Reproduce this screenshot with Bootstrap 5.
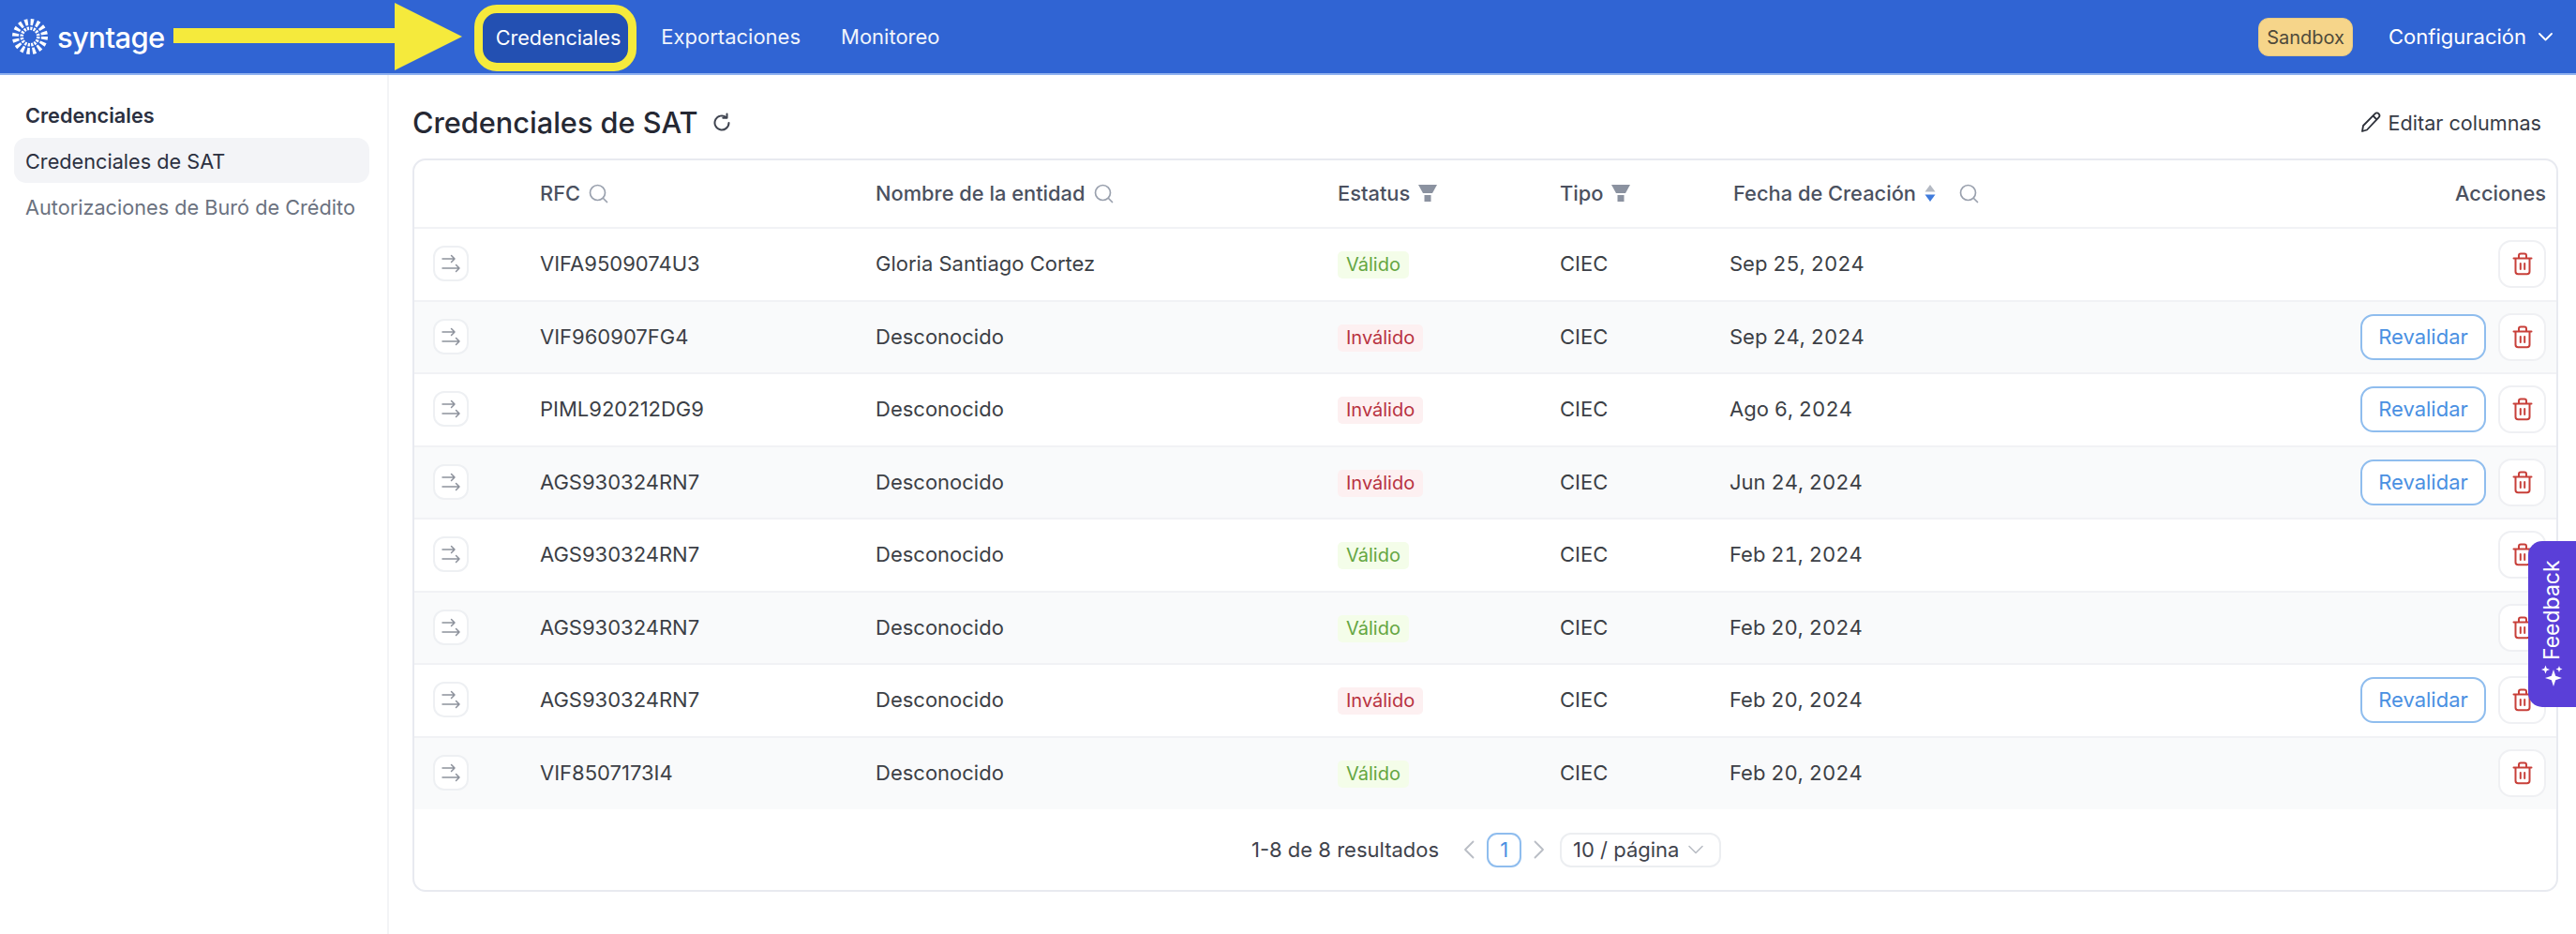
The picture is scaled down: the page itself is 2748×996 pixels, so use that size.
<!DOCTYPE html>
<html lang="es">
<head>
<meta charset="utf-8">
<title>Credenciales de SAT</title>
<link rel="stylesheet" href="https://cdn.jsdelivr.net/npm/bootstrap@5.3.0/dist/css/bootstrap.min.css">
<style>
html,body{height:100%;}
body{font-family:"Inter","Liberation Sans",sans-serif;font-size:22px;color:#3c3f46;background:#fff;overflow:hidden;}
.topbar{height:80px;background:#3064d3;border-bottom:2px solid #8fb1ee;padding:0 25px 0 13px;flex-wrap:nowrap;}
.brand-logo{color:#fff;font-size:31px;font-weight:500;letter-spacing:-.6px;gap:10px;line-height:1;}
.pointer{margin:0 13px 0 9px;flex:none;}
.topnav{gap:26px;}
.topnav .nav-link{color:#fff;font-size:22px;padding:0;line-height:53px;opacity:.93;}
.topnav .nav-link.here{box-sizing:content-box;background:#2350b2;border:9px solid #f5ea3c;border-radius:24px;padding:0 8px 0 14px;margin-top:2px;opacity:1;font-size:21.6px;}
.topnav .nudge{margin-left:17px;}
.sandbox-tag{background:#f6d58a;color:#4f4a3a;font-size:20px;font-weight:400;border-radius:11px;padding:0;width:101px;height:41px;line-height:41px;border:1px solid #e6c983;}
.config-link{color:#fff;font-size:22px;margin-left:38px;gap:13px;}
.shell{height:calc(100% - 80px);}
.sidenav{width:415px;flex:none;border-right:2px solid #f3f4f6;padding:21px 19px 0 15px;}
.sidenav .grp{font-size:21.7px;font-weight:600;color:#2b3040;padding-left:12px;line-height:44px;height:46px;}
.sidenav .nav-link{font-size:21.7px;padding:0 0 0 12px;height:48px;line-height:50px;border-radius:13px;color:#6b7280;margin-bottom:1px;white-space:nowrap;}
.sidenav .nav-link.active{background:#f3f4f7;color:#2b3040;}
.content{flex:1;min-width:0;padding:28px 19px 0 25px;}
.head-line{height:46px;margin-bottom:15px;}
.page-title{font-size:30.7px;font-weight:500;color:#252833;margin:0;gap:14px;}
.edit-cols{font-size:21.6px;color:#373b46;gap:8px;margin-right:18px;}
.table-box{border:2px solid #e8eaf0;border-radius:14px;overflow:hidden;background:#fff;width:2289px;}
.cred-table{table-layout:fixed;margin:0;width:100%;--bs-table-bg:transparent;}
.cred-table th,.cred-table td{padding:0 0 0 14px;vertical-align:middle;border-bottom:2px solid #f1f2f5;font-size:22px;color:#3c3f46;white-space:nowrap;}
.cred-table td:nth-child(6){font-variant-numeric:tabular-nums;}
.cred-table th{height:72px;font-weight:500;font-size:21.85px;color:#4b5160;}
.cred-table td{height:77.5px;}
.cred-table tbody tr:nth-child(even) td{background:#f9fafb;}
.cred-table tbody tr:last-child td{border-bottom:0;}
.cred-table th .inner{display:inline-flex;align-items:center;gap:9px;}
.fecha-head{padding-left:18px!important;}
.act{text-align:right;padding-right:11px!important;}
.act-flex{display:flex;justify-content:flex-end;align-items:center;gap:13px;}
.arrow-btn{width:38px;height:38px;border:2px solid #eef0f3;border-radius:12px;background:#fff;padding:0;margin-left:6px;display:inline-flex;align-items:center;justify-content:center;}
.trash-btn{width:51px;height:51px;border:2px solid #eff0f3;border-radius:14px;background:#fff;padding:0;display:inline-flex;align-items:center;justify-content:center;}
.reval-btn{width:134px;height:49px;padding:0;font-size:22px;color:#4a90e2;border:2px solid #8fbdee;border-radius:14px;background:#fff;}
.st{display:inline-block;font-size:20px;font-weight:400;padding:0 9px;height:29px;line-height:29px;border-radius:5px;}
.st-ok{background:#f4fde9;color:#65a642;}
.st-bad{background:#fdf0f1;color:#b8323f;}
.pager-row{height:86px;gap:0;padding-left:893px;font-size:22px;color:#3f434c;}
.pager-row .pagination{margin:0 16px 0 26px;align-items:center;gap:14px;--bs-pagination-bg:transparent;--bs-pagination-border-width:0;}
.pager-row .page-link{padding:0;background:none;border:0;display:flex;align-items:center;justify-content:center;}
.pager-row .page-item.active .page-link{width:37px;height:37px;font-size:22px;color:#4a90e2;border:2px solid #8fbdee;border-radius:11px;background:#fff;}
.size-pick{width:172px;height:37px;border:2px solid #eceef1;border-radius:12px;background:#fff;font-size:22px;color:#3f434c;padding:0 0 0 12px;gap:10px;line-height:1;}
.feedback-tab{position:absolute;right:0;top:577px;width:51px;height:177px;background:#5a3fd8;color:#fff;font-size:23px;writing-mode:vertical-rl;transform:rotate(180deg);border-radius:0 15px 15px 0;gap:5px;}
</style>
</head>
<body>
<nav class="navbar topbar d-flex align-items-center justify-content-start">
  <a class="d-flex align-items-center text-decoration-none brand-logo" href="#">
    <svg width="38" height="38" viewBox="0 0 38 38" fill="none" stroke="#fff"><circle cx="19" cy="19" r="15.5" stroke-width="7" stroke-dasharray="3.2 2.9"/><circle cx="19" cy="19" r="8.8" stroke-width="3.6" stroke-dasharray="2.2 1.26"/></svg>
    <span>syntage</span>
  </a>
  <svg class="pointer" width="308" height="72" viewBox="0 0 308 72"><path d="M0 27h236V0l72 36-72 36V43H0z" fill="#f5ea3c"/></svg>
  <ul class="nav topnav align-items-center">
    <li class="nav-item"><a class="nav-link here" href="#">Credenciales</a></li>
    <li class="nav-item"><a class="nav-link" href="#">Exportaciones</a></li>
    <li class="nav-item nudge"><a class="nav-link" href="#">Monitoreo</a></li>
  </ul>
  <span class="badge sandbox-tag ms-auto">Sandbox</span>
  <a class="d-flex align-items-center text-decoration-none config-link" href="#">Configuración
    <svg width="15" height="9" viewBox="0 0 15 9" fill="none" stroke="#fff" stroke-width="1.8" stroke-linecap="round" stroke-linejoin="round"><path d="M1 1l6.500 6.500L14 1"/></svg>
  </a>
</nav>
<div class="d-flex shell">
  <aside class="sidenav">
    <div class="grp">Credenciales</div>
    <nav class="nav flex-column">
      <a class="nav-link active" href="#">Credenciales de SAT</a>
      <a class="nav-link" href="#">Autorizaciones de Buró de Crédito</a>
    </nav>
  </aside>
  <main class="content">
    <div class="d-flex align-items-center justify-content-between head-line">
      <h1 class="page-title d-flex align-items-center">Credenciales de SAT
        <svg width="22" height="22" viewBox="0 0 22 22" fill="none" stroke="#3f4450" stroke-width="2" stroke-linecap="round" stroke-linejoin="round"><path d="M18.500 11A7.500 7.500 0 1 1 15.700 5.100"/><path d="M16.500 1.500v4.200h-4.200"/></svg>
      </h1>
      <a class="d-flex align-items-center text-decoration-none edit-cols" href="#">
        <svg width="22" height="23" viewBox="0 0 22 23" fill="none" stroke="#2b2f38" stroke-width="1.800" stroke-linejoin="round"><path d="M2 21l1-6L15.500 2.300c1.200-1.200 3-1.200 4.100 0s1 2.900-.2 4.100L7 19.500z"/><path d="M13.500 4.500l4 4"/></svg>
        Editar columnas
      </a>
    </div>
    <div class="table-box">
      <table class="table cred-table">
        <colgroup><col style="width:120px"><col style="width:358px"><col style="width:493px"><col style="width:237px"><col style="width:181px"><col style="width:568px"><col></colgroup>
        <thead>
          <tr>
            <th></th>
            <th><span class="inner">RFC <svg width="21" height="21" viewBox="0 0 21 21" fill="none" stroke="#9aa1ae" stroke-width="1.700" stroke-linecap="round"><circle cx="9.500" cy="9.500" r="8"/><path d="M15.500 15.500l4 4"/></svg></span></th>
            <th><span class="inner">Nombre de la entidad <svg width="21" height="21" viewBox="0 0 21 21" fill="none" stroke="#9aa1ae" stroke-width="1.700" stroke-linecap="round"><circle cx="9.500" cy="9.500" r="8"/><path d="M15.500 15.500l4 4"/></svg></span></th>
            <th><span class="inner">Estatus <svg width="20" height="18" viewBox="0 0 20 18" fill="#8b92a0"><path d="M0 0h20l-5 9H5z"/><path d="M6.500 11h7v7h-7z"/></svg></span></th>
            <th><span class="inner">Tipo <svg width="20" height="18" viewBox="0 0 20 18" fill="#8b92a0"><path d="M0 0h20l-5 9H5z"/><path d="M6.500 11h7v7h-7z"/></svg></span></th>
            <th class="fecha-head"><span class="inner">Fecha de Creación <svg width="12" height="20" viewBox="0 0 12 20"><path d="M6 1L11.500 8.500H.5z" fill="#b4b9c3"/><path d="M6 19L11.500 11.500H.5z" fill="#3f7bdc"/></svg> <svg class="ms-3" width="21" height="21" viewBox="0 0 21 21" fill="none" stroke="#9aa1ae" stroke-width="1.700" stroke-linecap="round"><circle cx="9.500" cy="9.500" r="8"/><path d="M15.500 15.500l4 4"/></svg></span></th>
            <th class="act">Acciones</th>
          </tr>
        </thead>
        <tbody>
          <tr><td><button class="arrow-btn"><svg width="22" height="22" viewBox="0 0 22 22" fill="none" stroke="#8d929c" stroke-width="1.500" stroke-linecap="round" stroke-linejoin="round"><path d="M2 6h13M11.500 2.500L15 6l-3.500 3.500M2 16h18M16.500 12.500L20 16l-3.500 3.500"/></svg></button></td><td>VIFA9509074U3</td><td>Gloria Santiago Cortez</td><td><span class="badge st st-ok">Válido</span></td><td>CIEC</td><td>Sep 25, 2024</td><td class="act"><div class="act-flex"><button class="trash-btn"><svg width="22" height="25" viewBox="0 0 22 25" fill="none" stroke="#c8403a" stroke-width="2" stroke-linecap="round" stroke-linejoin="round"><path d="M1.500 6.500h19M7 6.500V3.500c0-1.200.8-2 2-2h4c1.200 0 2 .8 2 2v3M3.500 6.500v14c0 1.700 1 2.800 2.700 2.800h9.600c1.700 0 2.700-1.100 2.700-2.800v-14M8.800 12v6M13.200 12v6"/></svg></button></div></td></tr>
          <tr><td><button class="arrow-btn"><svg width="22" height="22" viewBox="0 0 22 22" fill="none" stroke="#8d929c" stroke-width="1.500" stroke-linecap="round" stroke-linejoin="round"><path d="M2 6h13M11.500 2.500L15 6l-3.500 3.500M2 16h18M16.500 12.500L20 16l-3.500 3.500"/></svg></button></td><td>VIF960907FG4</td><td>Desconocido</td><td><span class="badge st st-bad">Inválido</span></td><td>CIEC</td><td>Sep 24, 2024</td><td class="act"><div class="act-flex"><button class="btn reval-btn">Revalidar</button><button class="trash-btn"><svg width="22" height="25" viewBox="0 0 22 25" fill="none" stroke="#c8403a" stroke-width="2" stroke-linecap="round" stroke-linejoin="round"><path d="M1.500 6.500h19M7 6.500V3.500c0-1.200.8-2 2-2h4c1.200 0 2 .8 2 2v3M3.500 6.500v14c0 1.700 1 2.800 2.700 2.800h9.600c1.700 0 2.700-1.100 2.700-2.800v-14M8.800 12v6M13.200 12v6"/></svg></button></div></td></tr>
          <tr><td><button class="arrow-btn"><svg width="22" height="22" viewBox="0 0 22 22" fill="none" stroke="#8d929c" stroke-width="1.500" stroke-linecap="round" stroke-linejoin="round"><path d="M2 6h13M11.500 2.500L15 6l-3.500 3.500M2 16h18M16.500 12.500L20 16l-3.500 3.500"/></svg></button></td><td>PIML920212DG9</td><td>Desconocido</td><td><span class="badge st st-bad">Inválido</span></td><td>CIEC</td><td>Ago 6, 2024</td><td class="act"><div class="act-flex"><button class="btn reval-btn">Revalidar</button><button class="trash-btn"><svg width="22" height="25" viewBox="0 0 22 25" fill="none" stroke="#c8403a" stroke-width="2" stroke-linecap="round" stroke-linejoin="round"><path d="M1.500 6.500h19M7 6.500V3.500c0-1.200.8-2 2-2h4c1.200 0 2 .8 2 2v3M3.500 6.500v14c0 1.700 1 2.800 2.700 2.800h9.600c1.700 0 2.700-1.100 2.700-2.800v-14M8.800 12v6M13.200 12v6"/></svg></button></div></td></tr>
          <tr><td><button class="arrow-btn"><svg width="22" height="22" viewBox="0 0 22 22" fill="none" stroke="#8d929c" stroke-width="1.500" stroke-linecap="round" stroke-linejoin="round"><path d="M2 6h13M11.500 2.500L15 6l-3.500 3.500M2 16h18M16.500 12.500L20 16l-3.500 3.500"/></svg></button></td><td>AGS930324RN7</td><td>Desconocido</td><td><span class="badge st st-bad">Inválido</span></td><td>CIEC</td><td>Jun 24, 2024</td><td class="act"><div class="act-flex"><button class="btn reval-btn">Revalidar</button><button class="trash-btn"><svg width="22" height="25" viewBox="0 0 22 25" fill="none" stroke="#c8403a" stroke-width="2" stroke-linecap="round" stroke-linejoin="round"><path d="M1.500 6.500h19M7 6.500V3.500c0-1.200.8-2 2-2h4c1.200 0 2 .8 2 2v3M3.500 6.500v14c0 1.700 1 2.800 2.700 2.800h9.600c1.700 0 2.700-1.100 2.700-2.800v-14M8.800 12v6M13.200 12v6"/></svg></button></div></td></tr>
          <tr><td><button class="arrow-btn"><svg width="22" height="22" viewBox="0 0 22 22" fill="none" stroke="#8d929c" stroke-width="1.500" stroke-linecap="round" stroke-linejoin="round"><path d="M2 6h13M11.500 2.500L15 6l-3.500 3.500M2 16h18M16.500 12.500L20 16l-3.500 3.500"/></svg></button></td><td>AGS930324RN7</td><td>Desconocido</td><td><span class="badge st st-ok">Válido</span></td><td>CIEC</td><td>Feb 21, 2024</td><td class="act"><div class="act-flex"><button class="trash-btn"><svg width="22" height="25" viewBox="0 0 22 25" fill="none" stroke="#c8403a" stroke-width="2" stroke-linecap="round" stroke-linejoin="round"><path d="M1.500 6.500h19M7 6.500V3.500c0-1.200.8-2 2-2h4c1.200 0 2 .8 2 2v3M3.500 6.500v14c0 1.700 1 2.800 2.700 2.800h9.600c1.700 0 2.700-1.100 2.700-2.800v-14M8.800 12v6M13.200 12v6"/></svg></button></div></td></tr>
          <tr><td><button class="arrow-btn"><svg width="22" height="22" viewBox="0 0 22 22" fill="none" stroke="#8d929c" stroke-width="1.500" stroke-linecap="round" stroke-linejoin="round"><path d="M2 6h13M11.500 2.500L15 6l-3.500 3.500M2 16h18M16.500 12.500L20 16l-3.500 3.500"/></svg></button></td><td>AGS930324RN7</td><td>Desconocido</td><td><span class="badge st st-ok">Válido</span></td><td>CIEC</td><td>Feb 20, 2024</td><td class="act"><div class="act-flex"><button class="trash-btn"><svg width="22" height="25" viewBox="0 0 22 25" fill="none" stroke="#c8403a" stroke-width="2" stroke-linecap="round" stroke-linejoin="round"><path d="M1.500 6.500h19M7 6.500V3.500c0-1.200.8-2 2-2h4c1.200 0 2 .8 2 2v3M3.500 6.500v14c0 1.700 1 2.800 2.700 2.800h9.600c1.700 0 2.700-1.100 2.700-2.800v-14M8.800 12v6M13.200 12v6"/></svg></button></div></td></tr>
          <tr><td><button class="arrow-btn"><svg width="22" height="22" viewBox="0 0 22 22" fill="none" stroke="#8d929c" stroke-width="1.500" stroke-linecap="round" stroke-linejoin="round"><path d="M2 6h13M11.500 2.500L15 6l-3.500 3.500M2 16h18M16.500 12.500L20 16l-3.500 3.500"/></svg></button></td><td>AGS930324RN7</td><td>Desconocido</td><td><span class="badge st st-bad">Inválido</span></td><td>CIEC</td><td>Feb 20, 2024</td><td class="act"><div class="act-flex"><button class="btn reval-btn">Revalidar</button><button class="trash-btn"><svg width="22" height="25" viewBox="0 0 22 25" fill="none" stroke="#c8403a" stroke-width="2" stroke-linecap="round" stroke-linejoin="round"><path d="M1.500 6.500h19M7 6.500V3.500c0-1.200.8-2 2-2h4c1.200 0 2 .8 2 2v3M3.500 6.500v14c0 1.700 1 2.800 2.700 2.800h9.600c1.700 0 2.700-1.100 2.700-2.800v-14M8.800 12v6M13.200 12v6"/></svg></button></div></td></tr>
          <tr><td><button class="arrow-btn"><svg width="22" height="22" viewBox="0 0 22 22" fill="none" stroke="#8d929c" stroke-width="1.500" stroke-linecap="round" stroke-linejoin="round"><path d="M2 6h13M11.500 2.500L15 6l-3.500 3.500M2 16h18M16.500 12.500L20 16l-3.500 3.500"/></svg></button></td><td>VIF8507173I4</td><td>Desconocido</td><td><span class="badge st st-ok">Válido</span></td><td>CIEC</td><td>Feb 20, 2024</td><td class="act"><div class="act-flex"><button class="trash-btn"><svg width="22" height="25" viewBox="0 0 22 25" fill="none" stroke="#c8403a" stroke-width="2" stroke-linecap="round" stroke-linejoin="round"><path d="M1.500 6.500h19M7 6.500V3.500c0-1.200.8-2 2-2h4c1.200 0 2 .8 2 2v3M3.500 6.500v14c0 1.700 1 2.800 2.700 2.800h9.600c1.700 0 2.700-1.100 2.700-2.800v-14M8.800 12v6M13.200 12v6"/></svg></button></div></td></tr>
        </tbody>
      </table>
      <div class="d-flex align-items-center pager-row">
        <span>1-8 de 8 resultados</span>
        <ul class="pagination">
          <li class="page-item"><a class="page-link" href="#"><svg width="12" height="20" viewBox="0 0 12 20" fill="none" stroke="#b9bdc5" stroke-width="1.800" stroke-linecap="round" stroke-linejoin="round"><path d="M10.500 1.500L2 10l8.500 8.500"/></svg></a></li>
          <li class="page-item active"><a class="page-link" href="#">1</a></li>
          <li class="page-item"><a class="page-link" href="#"><svg width="12" height="20" viewBox="0 0 12 20" fill="none" stroke="#b9bdc5" stroke-width="1.800" stroke-linecap="round" stroke-linejoin="round"><path d="M1.500 1.500L10 10l-8.500 8.500"/></svg></a></li>
        </ul>
        <div class="d-flex align-items-center size-pick">10 / página
          <svg width="16" height="10" viewBox="0 0 16 10" fill="none" stroke="#b9bdc5" stroke-width="1.600" stroke-linecap="round" stroke-linejoin="round"><path d="M1 1.500l7 7 7-7"/></svg>
        </div>
      </div>
    </div>
  </main>
</div>
<a class="feedback-tab d-flex align-items-center justify-content-center text-decoration-none" href="#">
  <svg width="24" height="24" viewBox="0 0 24 24" fill="#fff" style="transform:rotate(90deg)"><path d="M10 5l2.200 6.800L19 14l-6.800 2.200L10 23l-2.200-6.800L1 14l6.800-2.200z"/><path d="M19 1l1.200 3.300L23.500 5.500l-3.300 1.200L19 10l-1.200-3.300L14.500 5.500l3.300-1.200z"/><path d="M19.500 16.500l.9 2.600 2.600.9-2.600.9-.9 2.600-.9-2.600-2.600-.9 2.600-.9z"/></svg>
  <span>Feedback</span>
</a>
<script src="https://cdn.jsdelivr.net/npm/bootstrap@5.3.0/dist/js/bootstrap.bundle.min.js"></script>
</body>
</html>
